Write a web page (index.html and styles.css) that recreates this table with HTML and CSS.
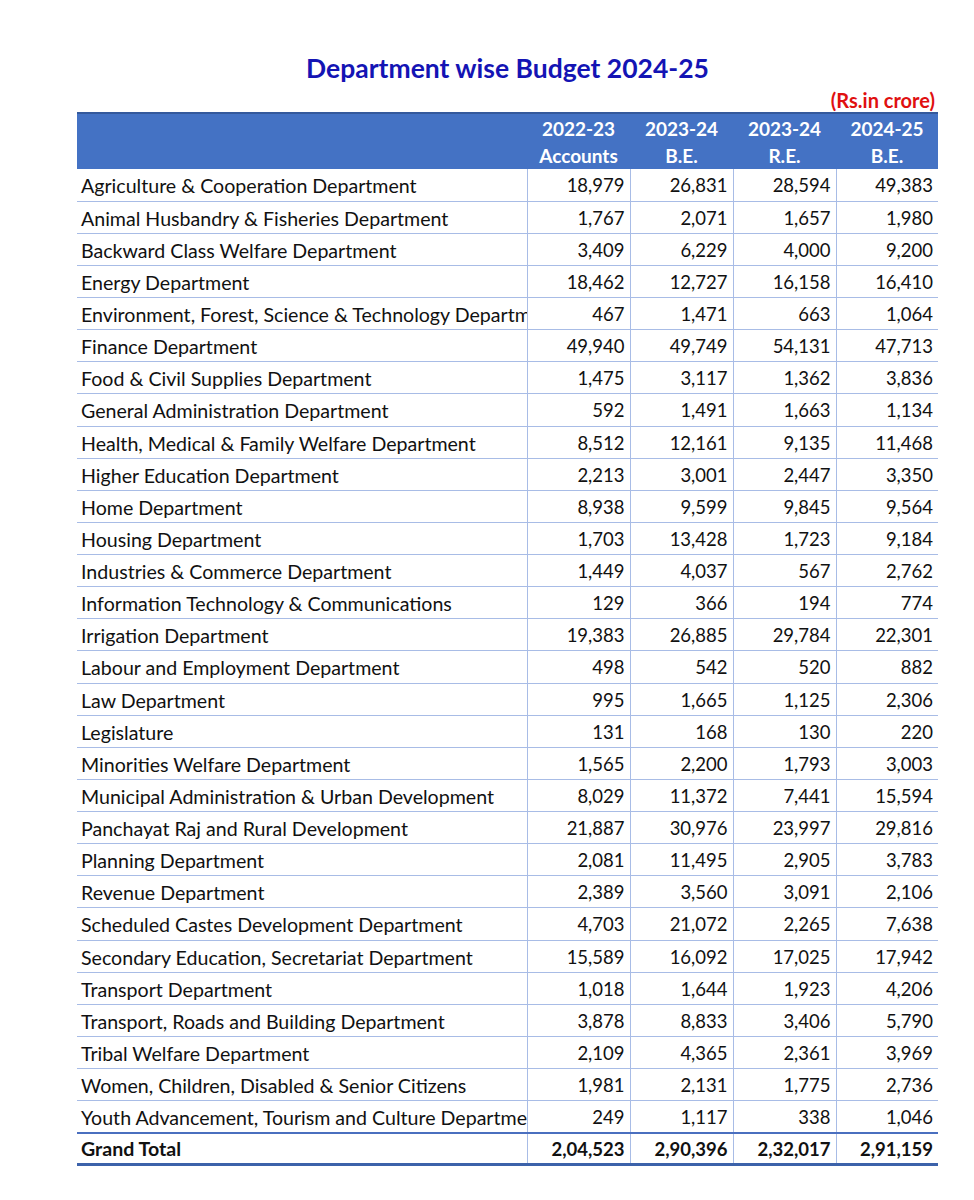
FILE: index.html
```html
<!DOCTYPE html>
<html>
<head>
<meta charset="utf-8">
<link rel="stylesheet" href="styles.css">
</head>
<body>
<div class="sheet">
  <h1 class="title">Department wise Budget 2024-25</h1>
  <div class="unit">(Rs.in crore)</div>
  <table class="budget">
    <colgroup>
      <col class="c-name"><col class="c-num"><col class="c-num"><col class="c-num"><col class="c-last">
    </colgroup>
    <thead>
      <tr>
        <th class="name"></th>
        <th>2022-23<br>Accounts</th>
        <th>2023-24<br>B.E.</th>
        <th>2023-24<br>R.E.</th>
        <th>2024-25<br>B.E.</th>
      </tr>
    </thead>
    <tbody>
      <tr><td class="name">Agriculture &amp; Cooperation Department</td><td>18,979</td><td>26,831</td><td>28,594</td><td>49,383</td></tr>
      <tr><td class="name">Animal Husbandry &amp; Fisheries Department</td><td>1,767</td><td>2,071</td><td>1,657</td><td>1,980</td></tr>
      <tr><td class="name">Backward Class Welfare Department</td><td>3,409</td><td>6,229</td><td>4,000</td><td>9,200</td></tr>
      <tr><td class="name">Energy Department</td><td>18,462</td><td>12,727</td><td>16,158</td><td>16,410</td></tr>
      <tr><td class="name">Environment, Forest, Science &amp; Technology Department</td><td>467</td><td>1,471</td><td>663</td><td>1,064</td></tr>
      <tr><td class="name">Finance Department</td><td>49,940</td><td>49,749</td><td>54,131</td><td>47,713</td></tr>
      <tr><td class="name">Food &amp; Civil Supplies Department</td><td>1,475</td><td>3,117</td><td>1,362</td><td>3,836</td></tr>
      <tr><td class="name">General Administration Department</td><td>592</td><td>1,491</td><td>1,663</td><td>1,134</td></tr>
      <tr><td class="name">Health, Medical &amp; Family Welfare Department</td><td>8,512</td><td>12,161</td><td>9,135</td><td>11,468</td></tr>
      <tr><td class="name">Higher Education Department</td><td>2,213</td><td>3,001</td><td>2,447</td><td>3,350</td></tr>
      <tr><td class="name">Home Department</td><td>8,938</td><td>9,599</td><td>9,845</td><td>9,564</td></tr>
      <tr><td class="name">Housing Department</td><td>1,703</td><td>13,428</td><td>1,723</td><td>9,184</td></tr>
      <tr><td class="name">Industries &amp; Commerce Department</td><td>1,449</td><td>4,037</td><td>567</td><td>2,762</td></tr>
      <tr><td class="name">Information Technology &amp; Communications</td><td>129</td><td>366</td><td>194</td><td>774</td></tr>
      <tr><td class="name">Irrigation Department</td><td>19,383</td><td>26,885</td><td>29,784</td><td>22,301</td></tr>
      <tr><td class="name">Labour and Employment Department</td><td>498</td><td>542</td><td>520</td><td>882</td></tr>
      <tr><td class="name">Law Department</td><td>995</td><td>1,665</td><td>1,125</td><td>2,306</td></tr>
      <tr><td class="name">Legislature</td><td>131</td><td>168</td><td>130</td><td>220</td></tr>
      <tr><td class="name">Minorities Welfare Department</td><td>1,565</td><td>2,200</td><td>1,793</td><td>3,003</td></tr>
      <tr><td class="name">Municipal Administration &amp; Urban Development</td><td>8,029</td><td>11,372</td><td>7,441</td><td>15,594</td></tr>
      <tr><td class="name">Panchayat Raj and Rural Development</td><td>21,887</td><td>30,976</td><td>23,997</td><td>29,816</td></tr>
      <tr><td class="name">Planning Department</td><td>2,081</td><td>11,495</td><td>2,905</td><td>3,783</td></tr>
      <tr><td class="name">Revenue Department</td><td>2,389</td><td>3,560</td><td>3,091</td><td>2,106</td></tr>
      <tr><td class="name">Scheduled Castes Development Department</td><td>4,703</td><td>21,072</td><td>2,265</td><td>7,638</td></tr>
      <tr><td class="name">Secondary Education, Secretariat Department</td><td>15,589</td><td>16,092</td><td>17,025</td><td>17,942</td></tr>
      <tr><td class="name">Transport Department</td><td>1,018</td><td>1,644</td><td>1,923</td><td>4,206</td></tr>
      <tr><td class="name">Transport, Roads and Building Department</td><td>3,878</td><td>8,833</td><td>3,406</td><td>5,790</td></tr>
      <tr><td class="name">Tribal Welfare Department</td><td>2,109</td><td>4,365</td><td>2,361</td><td>3,969</td></tr>
      <tr><td class="name">Women, Children, Disabled &amp; Senior Citizens</td><td>1,981</td><td>2,131</td><td>1,775</td><td>2,736</td></tr>
      <tr class="last"><td class="name">Youth Advancement, Tourism and Culture Department</td><td>249</td><td>1,117</td><td>338</td><td>1,046</td></tr>
    </tbody>
    <tfoot>
      <tr><td class="name">Grand Total</td><td>2,04,523</td><td>2,90,396</td><td>2,32,017</td><td>2,91,159</td></tr>
    </tfoot>
  </table>
</div>
</body>
</html>
```

FILE: styles.css
```css
html, body {
  margin: 0;
  padding: 0;
  background: #ffffff;
}

body {
  font-family: "Lato", "Noto Sans", sans-serif;
  color: #111111;
}

.sheet {
  width: 861px;
  margin-left: 77px;
  padding-top: 50px;
}

.title {
  margin: 0;
  font-size: 26.5px;
  line-height: 36px;
  font-weight: 700;
  color: #1414b4;
  text-align: center;
}

.unit {
  text-align: right;
  padding-right: 3px;
  margin-top: 2px;
  font-size: 20px;
  line-height: 24px;
  font-weight: 700;
  color: #e01010;
}

.budget {
  width: 861px;
  border-collapse: collapse;
  table-layout: fixed;
  font-size: 18.5px;
}

.c-name { width: 450px; }
.c-num { width: 103px; }
.c-last { width: 102px; }

.budget thead th {
  background: #4472c4;
  color: #ffffff;
  font-size: 19px;
  font-weight: 700;
  text-align: center;
  line-height: 27px;
  padding: 1px 0 0 0;
  height: 54px;
  border-top: 2px solid #34599c;
}

.budget tbody tr {
  height: 32.13px;
}

.budget td {
  padding: 1px 5px 0 0;
  text-align: right;
  border-bottom: 1px solid #a8bce6;
  border-left: 1px solid #a8bce6;
  line-height: 30px;
  white-space: nowrap;
  overflow: hidden;
}

.budget td.name {
  text-align: left;
  font-size: 19.6px;
  padding: 2px 0 0 4px;
  line-height: 29px;
  border-left: none;
  text-overflow: clip;
}

.budget tbody tr.last td {
  border-bottom: 2px solid #4a6fbf;
}

.budget tfoot td,
.budget tfoot td.name {
  font-weight: 700;
  padding-top: 1px;
  line-height: 28px;
  border-bottom: 3px solid #3c62aa;
}
```
